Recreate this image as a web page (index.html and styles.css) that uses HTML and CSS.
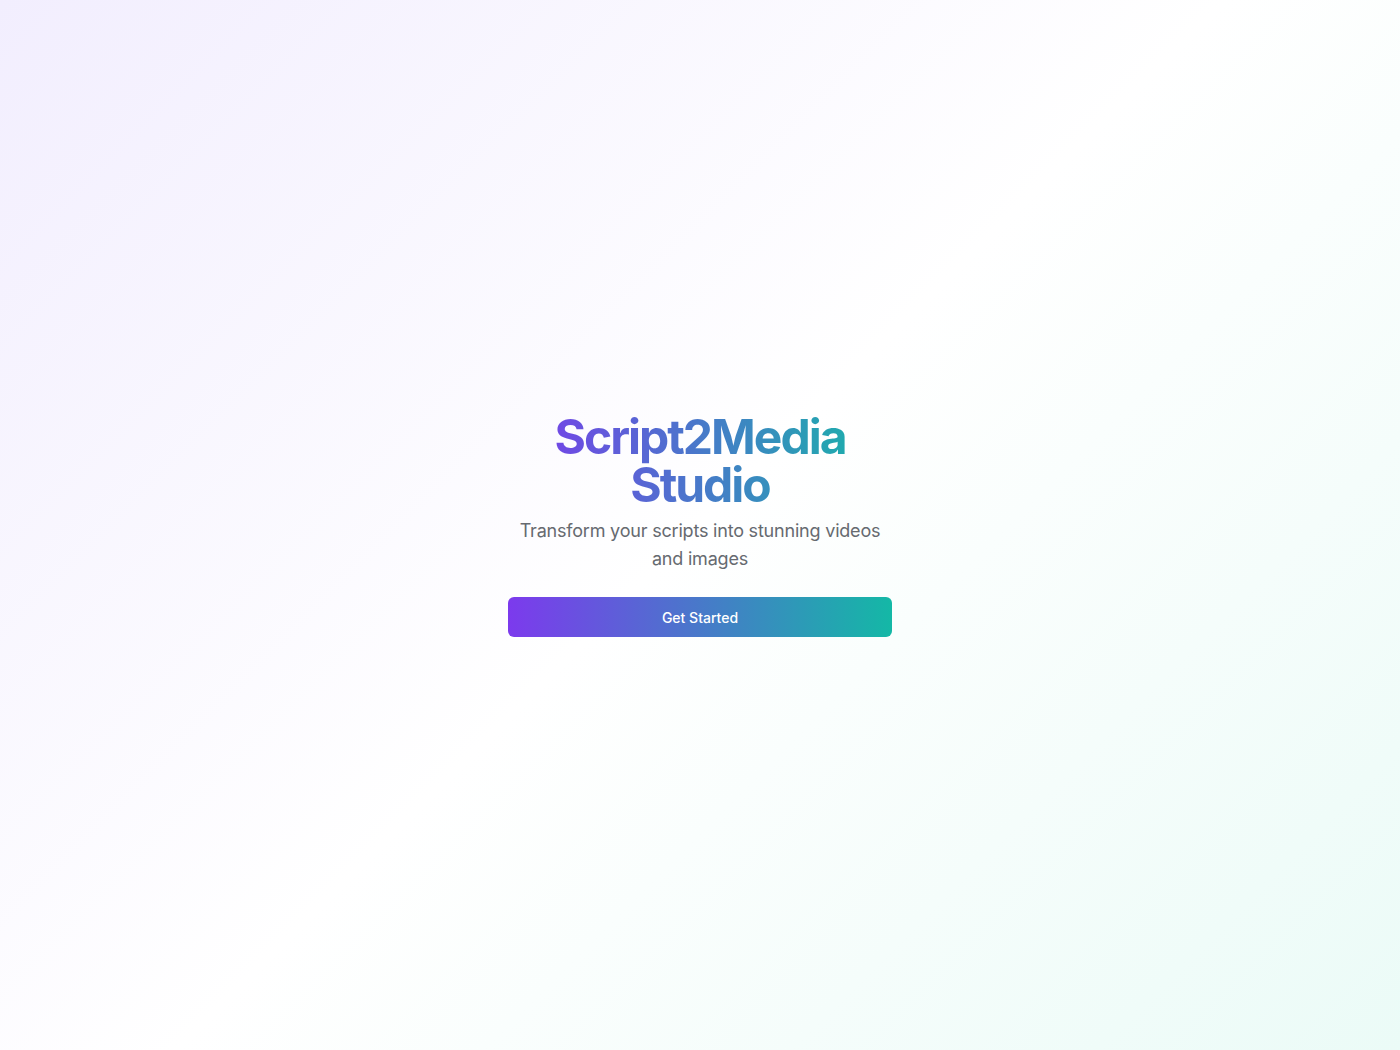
FILE: index.html
```html
<!DOCTYPE html>
<html lang="en">
<head>
<meta charset="utf-8">
<title>Script2Media Studio</title>
<link rel="stylesheet" href="styles.css">
</head>
<body>
<main class="page">
  <section class="hero">
    <h1 class="title">Script2Media Studio</h1>
    <p class="subtitle">Transform your scripts into stunning videos and images</p>
    <button class="cta" type="button">Get Started</button>
  </section>
</main>
</body>
</html>
```

FILE: styles.css
```css
* { box-sizing: border-box; }
html, body { margin: 0; padding: 0; }
body {
  font-family: Inter, "Liberation Sans", sans-serif;
  background: linear-gradient(135deg, #f2eefe 0%, #ffffff 50%, #ebfbf7 100%);
  min-height: 100vh;
}
.page {
  min-height: 100vh;
  display: flex;
  align-items: center;
  justify-content: center;
}
.hero {
  width: 384px;
  display: flex;
  flex-direction: column;
  align-items: stretch;
  text-align: center;
}
.title {
  margin: 0;
  font-size: 48px;
  line-height: 48px;
  font-weight: 700;
  letter-spacing: -2px;
  background: linear-gradient(90deg, #7c3aed, #14b8a6);
  -webkit-background-clip: text;
  background-clip: text;
  color: transparent;
}
.subtitle {
  margin: 8px 0 0;
  font-size: 18px;
  line-height: 28px;
  color: #666a70;
  letter-spacing: -0.2px;
}
.cta {
  margin-top: 24px;
  height: 40px;
  border: 0;
  border-radius: 6px;
  background: linear-gradient(90deg, #7c3aed, #14b8a6);
  color: #ffffff;
  font-family: inherit;
  font-size: 14px;
  font-weight: 500;
  line-height: 20px;
  padding: 11px 16px 9px;
  cursor: pointer;
}
```
